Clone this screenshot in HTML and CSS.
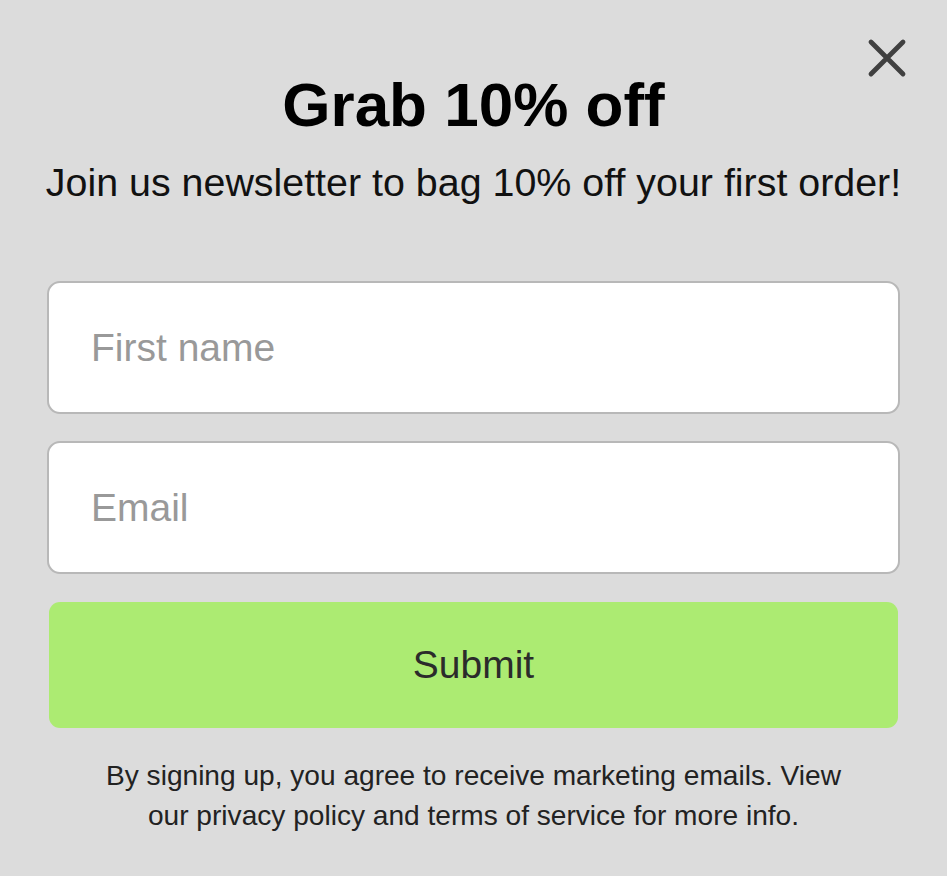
FILE: index.html
```html
<!DOCTYPE html>
<html lang="en">
<head>
<meta charset="utf-8">
<title>Grab 10% off</title>
<link rel="stylesheet" href="styles.css">
</head>
<body>
<div class="popup">
  <button class="close" aria-label="Close">
    <svg width="40" height="40" viewBox="0 0 40 40"><path d="M4 4 L36 36 M36 4 L4 36" stroke="#404040" stroke-width="4.8" stroke-linecap="round" fill="none"/></svg>
  </button>
  <h1 class="title">Grab 10% off</h1>
  <p class="subtitle">Join us newsletter to bag 10% off your first order!</p>
  <form class="form">
    <input class="field" type="text" placeholder="First name">
    <input class="field" type="email" placeholder="Email">
    <button class="submit" type="button">Submit</button>
  </form>
  <p class="legal">By signing up, you agree to receive marketing emails. View<br>our privacy policy and terms of service for more info.</p>
</div>
</body>
</html>
```
FILE: styles.css
```css
html, body {
  margin: 0;
  padding: 0;
  background: #dcdcdc;
}
body {
  font-family: "Liberation Sans", Arial, sans-serif;
  width: 947px;
  height: 876px;
  overflow: hidden;
}
.popup {
  position: relative;
  padding: 70px 47px 0 47px;
  display: flex;
  flex-direction: column;
}
.close {
  position: absolute;
  top: 38px;
  right: 40px;
  width: 40px;
  height: 40px;
  padding: 0;
  border: 0;
  background: transparent;
  display: flex;
}
.title {
  margin: 0;
  font-size: 62px;
  line-height: 70px;
  font-weight: 700;
  color: #000;
  text-align: center;
}
.subtitle {
  margin: 17px -20px 0 -20px;
  font-size: 39.4px;
  line-height: 50px;
  color: #111;
  text-align: center;
  white-space: nowrap;
}
.form {
  margin-top: 74px;
  display: flex;
  flex-direction: column;
  gap: 27px;
}
.field {
  box-sizing: border-box;
  height: 133px;
  width: 100%;
  margin: 0;
  border: 2px solid #b8b8b8;
  border-radius: 13px;
  background: #fff;
  padding: 0 0 0 42px;
  font-family: "Liberation Sans", Arial, sans-serif;
  font-size: 39px;
  color: #222;
  outline: none;
}
.field::placeholder {
  color: #999;
}
.submit {
  margin: 1px 2px 0 2px;
  height: 126px;
  border: 0;
  border-radius: 11px;
  background: #aceb72;
  font-family: "Liberation Sans", Arial, sans-serif;
  font-size: 39px;
  color: #2b2b2b;
}
.legal {
  margin: 28px 0 0 0;
  font-size: 28.1px;
  line-height: 40px;
  color: #222;
  text-align: center;
}
```
